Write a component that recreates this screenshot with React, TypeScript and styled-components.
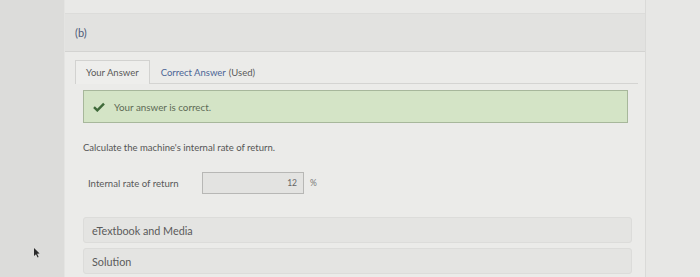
import React from 'react'
import styled, { createGlobalStyle } from 'styled-components'

const GlobalStyle = createGlobalStyle`
  html, body {
    margin: 0;
    padding: 0;
    background: #dededc;
  }
  body {
    font-family: Lato, "Open Sans", sans-serif;
    color: #555;
  }
`

const Screen = styled.div`
  width: 700px;
  height: 277px;
  overflow: hidden;
  display: flex;
  background: #e6e6e4;
`

const Gutter = styled.div`
  width: 65px;
  flex-shrink: 0;
  background: #dcdcda;
  display: flex;
  align-items: flex-start;
  justify-content: flex-start;
  padding: 248px 0 0 33px;
  box-sizing: border-box;
  border-right: 1px solid #e4e4e2;
`

const Panel = styled.div`
  width: 580px;
  flex-shrink: 0;
  padding-top: 13px;
  background: #e9e9e7;
  display: flex;
  flex-direction: column;
  border-right: 1px solid #dadad8;
`

const Header = styled.div`
  height: 37px;
  background: #e2e2e0;
  border-top: 1px solid #dcdcda;
  border-bottom: 1px solid #d3d3d1;
  display: flex;
  align-items: center;
  padding-left: 10px;
  font-size: 11px;
  color: #4e5b78;
`

const Body = styled.div`
  flex: 1;
  background: #ebebe9;
  padding: 8px 7px 0 10px;
  display: flex;
  flex-direction: column;
`

const Tabs = styled.div`
  display: flex;
  height: 23px;
  border-bottom: 1px solid #d4d4d2;
`

const Tab = styled.div<{ $active?: boolean }>`
  display: flex;
  align-items: center;
  padding: 0 10px;
  font-size: 9.5px;
  color: #5a5a5a;
  background: ${p => (p.$active ? '#eeeeec' : 'transparent')};
  border: 1px solid ${p => (p.$active ? '#d2d2d0' : 'transparent')};
  border-bottom: none;
  margin-bottom: -1px;
`

const TabLink = styled.span`
  color: #4c6596;
  margin-right: 3px;
`

const Content = styled.div`
  padding: 6px 6px 0 8px;
  display: flex;
  flex-direction: column;
`

const Success = styled.div`
  height: 31px;
  margin-right: 4px;
  background: #d4e4c6;
  border: 1px solid #a7b79b;
  display: flex;
  align-items: center;
  padding-left: 9px;
  gap: 9px;
  font-size: 9.8px;
  color: #5d6a55;
`

const Question = styled.div`
  margin-top: 19px;
  font-size: 9.5px;
  color: #555;
`

const InputRow = styled.div`
  margin-top: 19px;
  display: flex;
  align-items: center;
  padding-left: 5px;
`

const Label = styled.div`
  width: 114px;
  font-size: 9.6px;
  color: #595959;
`

const Field = styled.div`
  width: 102px;
  height: 22px;
  background: #e3e3e1;
  border: 1px solid #b7b7b5;
  display: flex;
  align-items: center;
  justify-content: flex-end;
  padding-right: 6px;
  box-sizing: border-box;
  font-size: 8.5px;
  color: #666;
`

const Unit = styled.div`
  margin-left: 6px;
  font-size: 8.5px;
  color: #777;
`

const Accordion = styled.div<{ $top: number }>`
  margin-top: ${p => p.$top}px;
  height: 26px;
  box-sizing: border-box;
  background: #e4e4e2;
  border: 1px solid #dcdcda;
  border-radius: 3px;
  display: flex;
  align-items: center;
  padding-left: 8px;
  font-size: 10.8px;
  color: #5a5a5a;
`

const RightSide = styled.div`
  flex: 1;
  background: #e7e7e5;
`

const Check = () => (
  <svg width="12" height="10" viewBox="0 0 12 10">
    <path d="M1 5.2 L4.3 8.4 L11 1.6" fill="none" stroke="#3f6a3a" strokeWidth="2.4" />
  </svg>
)

const Cursor = () => (
  <svg width="7" height="10" viewBox="0 0 7 10">
    <path d="M1 0 L1 8 L3 6.2 L4.6 9.5 L5.6 9 L4.1 5.8 L6.6 5.6 Z" fill="#2a2a2a" />
  </svg>
)

export default function App() {
  return (
    <>
      <GlobalStyle />
      <Screen>
        <Gutter>
          <Cursor />
        </Gutter>
        <Panel>
          <Header>(b)</Header>
          <Body>
            <Tabs>
              <Tab $active>Your Answer</Tab>
              <Tab>
                <TabLink>Correct Answer</TabLink>(Used)
              </Tab>
            </Tabs>
            <Content>
              <Success>
                <Check />
                Your answer is correct.
              </Success>
              <Question>Calculate the machine's internal rate of return.</Question>
              <InputRow>
                <Label>Internal rate of return</Label>
                <Field>12</Field>
                <Unit>%</Unit>
              </InputRow>
              <Accordion $top={23}>eTextbook and Media</Accordion>
              <Accordion $top={5}>Solution</Accordion>
            </Content>
          </Body>
        </Panel>
        <RightSide />
      </Screen>
    </>
  )
}
